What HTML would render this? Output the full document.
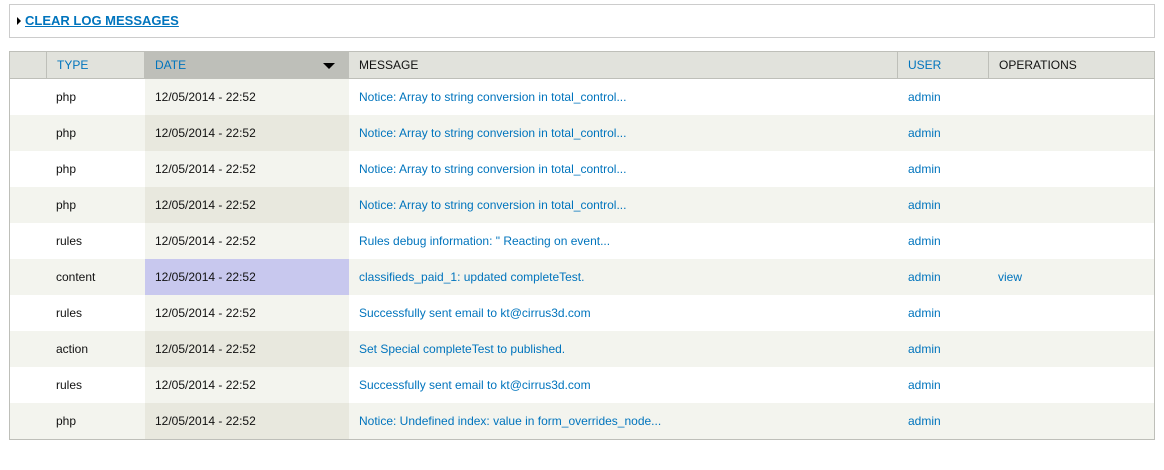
<!DOCTYPE html>
<html><head><style>
*{margin:0;padding:0;box-sizing:border-box}
body{width:1164px;height:470px;background:#fff;font-family:"Liberation Sans",sans-serif;font-size:12px;color:#111;position:relative;overflow:hidden}
.top{position:absolute;left:9px;top:4px;width:1146px;height:34px;border:1px solid #ccc}
.top a{position:absolute;left:15px;top:8px;color:#0074bd;font-weight:bold;font-size:13px;text-decoration:underline}
.tri{position:absolute;left:7px;top:12px;width:0;height:0;border-left:4px solid #000;border-top:4px solid transparent;border-bottom:4px solid transparent}
.tbl{position:absolute;left:9px;top:51px;width:1146px;height:389px;border:1px solid #bebfb9}
.row{position:absolute;left:0;width:1144px;height:36px}
.c{position:absolute;top:0;height:100%;line-height:36px;padding-left:10px;white-space:nowrap}
.l{color:#0074bd}
.h{height:27px;background:#e1e2dc;border-bottom:1px solid #bebfb9}
.h .c{line-height:26px;border-right:1px solid #bebfb9}
</style></head><body>
<div class="top"><span class="tri"></span><a>CLEAR LOG MESSAGES</a></div>
<div class="tbl">
<div class="row h" style="top:0">
<div class="c" style="left:0;width:37px"></div>
<div class="c l" style="left:37px;width:98px">TYPE</div>
<div class="c l" style="left:135px;width:204px;background:#bebfb9;border-right:none">DATE<span style="position:absolute;left:178px;top:11px;border-top:6px solid #000;border-left:6px solid transparent;border-right:6px solid transparent"></span></div>
<div class="c" style="left:339px;width:549px">MESSAGE</div>
<div class="c l" style="left:888px;width:91px">USER</div>
<div class="c" style="left:979px;width:165px;border-right:none">OPERATIONS</div>
</div>
<div id="rows"></div>
</div>
<script>
var d=[["php","Notice: Array to string conversion in total_control...",""],["php","Notice: Array to string conversion in total_control...",""],["php","Notice: Array to string conversion in total_control...",""],["php","Notice: Array to string conversion in total_control...",""],["rules","Rules debug information: \" Reacting on event...",""],["content","classifieds_paid_1: updated completeTest.","view"],["rules","Successfully sent email to kt@cirrus3d.com",""],["action","Set Special completeTest to published.",""],["rules","Successfully sent email to kt@cirrus3d.com",""],["php","Notice: Undefined index: value in form_overrides_node...",""]];
var h="";
d.forEach(function(r,i){var odd=i%2==1;var bg=odd?"#f3f4ee":"#fff";var db=i==5?"#c8c8ee":(odd?"#e8e8de":"#f3f4ee");
h+='<div class="row" style="top:'+(27+i*36)+'px;background:'+bg+'"><div class="c" style="left:36px">'+r[0]+'</div><div class="c" style="left:135px;width:204px;background:'+db+'">12/05/2014 - 22:52</div><div class="c l" style="left:339px">'+r[1]+'</div><div class="c l" style="left:888px">admin</div><div class="c l" style="left:978px">'+r[2]+'</div></div>';});
document.getElementById("rows").innerHTML=h;
</script>
</body></html>
